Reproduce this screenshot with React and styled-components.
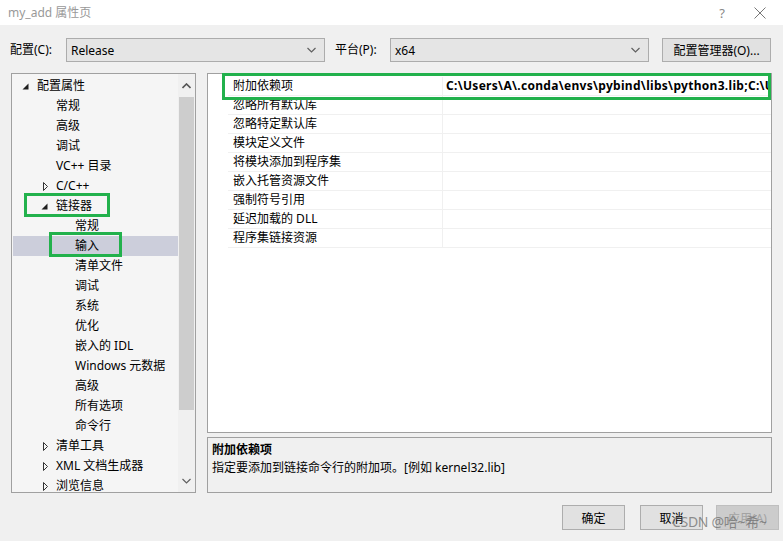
import React from 'react';
import styled, { createGlobalStyle } from 'styled-components';

const GlobalStyle = createGlobalStyle`
    html, body {
        margin: 0;
        padding: 0;
        background: #f0f0f0;
    }
    body {
        font-family: "Noto Sans", "Noto Sans CJK SC", sans-serif;
        font-size: 12px;
        color: #000;
    }
`;

const GREEN = '#22b14c';

const Dialog = styled.div`
    position: relative;
    width: 783px;
    height: 541px;
    display: flex;
    flex-direction: column;
    background: #f0f0f0;
    overflow: hidden;
`;

const TitleBar = styled.div`
    height: 25px;
    display: flex;
    align-items: center;
    padding-left: 8px;
    background: #fff;
    color: #999;
    font-size: 12px;
`;

const TitleText = styled.div`
    flex: 1;
    margin-top: -2px;
`;

const TitleButton = styled.div`
    width: ${(p) => p.w}px;
    display: flex;
    justify-content: center;
    align-items: center;
    color: #888;
    font-size: 13px;
`;

const Content = styled.div`
    display: flex;
    flex-direction: column;
    padding: 13px 11px 0 10px;
`;

const ConfigRow = styled.div`
    display: flex;
    align-items: center;
    height: 24px;
`;

const Label = styled.div`
    width: ${(p) => p.w}px;
    margin-left: ${(p) => p.ml || 0}px;
    line-height: 24px;
`;

const Combo = styled.div`
    box-sizing: border-box;
    width: 259px;
    height: 24px;
    display: flex;
    align-items: center;
    padding: 0 8px 0 4px;
    background: #e5e5e5;
    border: 1px solid #acacac;
    font-size: 12px;
`;

const ComboText = styled.div`
    flex: 1;
`;

const Button = styled.div`
    box-sizing: border-box;
    width: ${(p) => p.w || 63}px;
    height: ${(p) => p.h || 25}px;
    margin-left: ${(p) => p.ml || 0}px;
    display: flex;
    align-items: center;
    justify-content: center;
    background: ${(p) => (p.disabled ? '#cccccc' : '#e1e1e1')};
    border: 1px solid ${(p) => (p.disabled ? '#bfbfbf' : '#adadad')};
    color: ${(p) => (p.disabled ? '#a3a3a3' : '#000')};
    font-size: 12px;
`;

const Main = styled.div`
    display: flex;
    height: 420px;
    margin-top: 11px;
    gap: 11px;
`;

const Tree = styled.div`
    box-sizing: border-box;
    width: 185px;
    margin-left: 1px;
    display: flex;
    border: 1px solid #a0a0a0;
    background: #f5f5f5;
`;

const TreeList = styled.div`
    flex: 1;
    padding-top: 2px;
    overflow: hidden;
`;

const TreeRow = styled.div`
    position: relative;
    height: 20px;
    display: flex;
    align-items: center;
    padding-left: ${(p) => 9 + p.level * 19}px;
    margin-left: 1px;
    background: ${(p) => (p.selected ? '#cccedb' : 'transparent')};
    line-height: 20px;
    white-space: nowrap;
`;

const Toggle = styled.div`
    width: 15px;
    height: 20px;
    display: flex;
    align-items: center;
    padding-left: ${(p) => (p.closed ? 2 : 0)}px;
    box-sizing: border-box;
`;

const Mark = styled.div`
    position: absolute;
    left: ${(p) => p.l}px;
    top: ${(p) => p.t}px;
    width: ${(p) => p.w}px;
    height: ${(p) => p.h}px;
    box-sizing: border-box;
    border: 3px solid ${GREEN};
    pointer-events: none;
`;

const ScrollBar = styled.div`
    width: 17px;
    display: flex;
    flex-direction: column;
    background: #f0f0f0;
`;

const ScrollArrow = styled.div`
    height: 23px;
    display: flex;
    align-items: center;
    justify-content: center;
`;

const ScrollTrack = styled.div`
    flex: 1;
    display: flex;
    flex-direction: column;
`;

const Thumb = styled.div`
    height: 313px;
    margin: 0 1px;
    background: #cdcdcd;
`;

const RightCol = styled.div`
    width: 565px;
    display: flex;
    flex-direction: column;
    gap: 4px;
`;

const Grid = styled.div`
    position: relative;
    box-sizing: border-box;
    height: 360px;
    padding-top: 3px;
    background: #fff;
    border: 1px solid #a0a0a0;
`;

const GridRow = styled.div`
    display: flex;
    height: 19px;
    margin-left: 20px;
`;

const NameCell = styled.div`
    box-sizing: border-box;
    width: 215px;
    padding-left: 5px;
    border-bottom: 1px solid #f0f0f0;
    border-right: 1px solid #f0f0f0;
    line-height: 18px;
    white-space: nowrap;
`;

const ValueCell = styled.div`
    flex: 1;
    min-width: 0;
    padding-left: 3px;
    border-bottom: 1px solid #f0f0f0;
    line-height: 18px;
    font-weight: 700;
    letter-spacing: 0.3px;
    white-space: nowrap;
    overflow: hidden;
`;

const Desc = styled.div`
    box-sizing: border-box;
    flex: 1;
    padding: 3px 4px;
    background: #f0f0f0;
    border: 1px solid #a0a0a0;
    line-height: 18px;
`;

const DescTitle = styled.div`
    font-weight: 700;
`;

const Footer = styled.div`
    display: flex;
    justify-content: flex-end;
    margin-top: 12px;
    margin-right: -7px;
`;

const Watermark = styled.div`
    position: absolute;
    left: 672px;
    top: 512px;
    color: rgba(110, 110, 110, 0.75);
    font-size: 14px;
    line-height: 20px;
    letter-spacing: -0.3px;
    white-space: nowrap;
`;

const Expanded = () => (
    <svg width="7" height="7" viewBox="0 0 7 7">
        <path d="M6.5 0.5 L6.5 6.5 L0.5 6.5 Z" fill="#1e1e1e" />
    </svg>
);

const Collapsed = () => (
    <svg width="6" height="9" viewBox="0 0 6 9">
        <path d="M0.5 0.5 L4.5 4.5 L0.5 8.5 Z" fill="none" stroke="#333" strokeWidth="1" />
    </svg>
);

const Chevron = ({ up }) => (
    <svg width="9" height="6" viewBox="0 0 9 6">
        <path d={up ? 'M0.5 5 L4.5 1 L8.5 5' : 'M0.5 1 L4.5 5 L8.5 1'} fill="none" stroke={up ? '#555' : '#606060'} strokeWidth={up ? 1.6 : 1.2} />
    </svg>
);

const treeItems = [
    { text: '配置属性', level: 0, toggle: 'open' },
    { text: '常规', level: 1 },
    { text: '高级', level: 1 },
    { text: '调试', level: 1 },
    { text: 'VC++ 目录', level: 1 },
    { text: 'C/C++', level: 1, toggle: 'closed' },
    { text: '链接器', level: 1, toggle: 'open', mark: { l: 11, t: -3, w: 86, h: 24 } },
    { text: '常规', level: 2 },
    { text: '输入', level: 2, selected: true, mark: { l: 36, t: -4, w: 73, h: 25 } },
    { text: '清单文件', level: 2 },
    { text: '调试', level: 2 },
    { text: '系统', level: 2 },
    { text: '优化', level: 2 },
    { text: '嵌入的 IDL', level: 2 },
    { text: 'Windows 元数据', level: 2 },
    { text: '高级', level: 2 },
    { text: '所有选项', level: 2 },
    { text: '命令行', level: 2 },
    { text: '清单工具', level: 1, toggle: 'closed' },
    { text: 'XML 文档生成器', level: 1, toggle: 'closed' },
    { text: '浏览信息', level: 1, toggle: 'closed' },
];

const properties = [
    { name: '附加依赖项', value: 'C:\\Users\\A\\.conda\\envs\\pybind\\libs\\python3.lib;C:\\Users\\A\\.conda\\envs\\pybind\\libs' },
    { name: '忽略所有默认库', value: '' },
    { name: '忽略特定默认库', value: '' },
    { name: '模块定义文件', value: '' },
    { name: '将模块添加到程序集', value: '' },
    { name: '嵌入托管资源文件', value: '' },
    { name: '强制符号引用', value: '' },
    { name: '延迟加载的 DLL', value: '' },
    { name: '程序集链接资源', value: '' },
];

const App = () => (
    <Dialog>
        <GlobalStyle />
        <TitleBar>
            <TitleText>my_add 属性页</TitleText>
            <TitleButton w={30}>?</TitleButton>
            <TitleButton w={46}>
                <svg width="12" height="12" viewBox="0 0 12 12">
                    <path d="M0.5 0.5 L11.5 11.5 M11.5 0.5 L0.5 11.5" stroke="#777" strokeWidth="1" />
                </svg>
            </TitleButton>
        </TitleBar>
        <Content>
            <ConfigRow>
                <Label w={56}>配置(C):</Label>
                <Combo>
                    <ComboText>Release</ComboText>
                    <Chevron />
                </Combo>
                <Label w={55} ml={10}>平台(P):</Label>
                <Combo>
                    <ComboText>x64</ComboText>
                    <Chevron />
                </Combo>
                <Button w={109} h={24} ml={13}>配置管理器(O)...</Button>
            </ConfigRow>
            <Main>
                <Tree>
                    <TreeList>
                        {treeItems.map((item, i) => (
                            <TreeRow key={i} level={item.level} selected={item.selected}>
                                <Toggle closed={item.toggle === 'closed'}>
                                    {item.toggle === 'open' && <Expanded />}
                                    {item.toggle === 'closed' && <Collapsed />}
                                </Toggle>
                                {item.text}
                                {item.mark && <Mark {...item.mark} />}
                            </TreeRow>
                        ))}
                    </TreeList>
                    <ScrollBar>
                        <ScrollArrow><Chevron up /></ScrollArrow>
                        <ScrollTrack>
                            <Thumb />
                        </ScrollTrack>
                        <ScrollArrow><Chevron /></ScrollArrow>
                    </ScrollBar>
                </Tree>
                <RightCol>
                    <Grid>
                        {properties.map((p) => (
                            <GridRow key={p.name}>
                                <NameCell>{p.name}</NameCell>
                                <ValueCell>{p.value}</ValueCell>
                            </GridRow>
                        ))}
                        <Mark l={14} t={-1} w={549} h={27} />
                    </Grid>
                    <Desc>
                        <DescTitle>附加依赖项</DescTitle>
                        <div>指定要添加到链接命令行的附加项。[例如 kernel32.lib]</div>
                    </Desc>
                </RightCol>
            </Main>
            <Footer>
                <Button>确定</Button>
                <Button ml={15}>取消</Button>
                <Button ml={13} disabled>应用(A)</Button>
            </Footer>
        </Content>
        <Watermark>CSDN @哈~希~</Watermark>
    </Dialog>
);

export default App;
